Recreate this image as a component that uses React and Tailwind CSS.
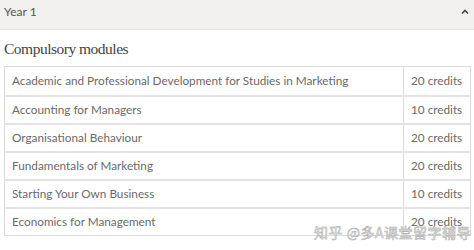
import React from "react";

const rows = [
  ["Academic and Professional Development for Studies in Marketing", "20 credits"],
  ["Accounting for Managers", "10 credits"],
  ["Organisational Behaviour", "20 credits"],
  ["Fundamentals of Marketing", "20 credits"],
  ["Starting Your Own Business", "10 credits"],
  ["Economics for Management", "20 credits"],
];

export default function App() {
  return (
    <div className="relative w-[474px] h-[250px] bg-white overflow-hidden text-[#555]" style={{ fontFamily: "Lato, 'Open Sans', sans-serif" }}>
      <div className="h-[30px] bg-[#f1f0ee] border-b border-[#e6e5e3] flex items-center justify-between pl-[4px] pr-[4px] pb-[6px]">
        <span className="text-[12px] text-[#555]">Year 1</span>
        <svg width="8" height="6" viewBox="0 0 8 6" className="mr-[1px]">
          <path d="M1 4.5 L4 1.5 L7 4.5" fill="none" stroke="#444" strokeWidth="1.6" />
        </svg>
      </div>
      <div className="pl-[4px] pt-[6px] h-[36px]">
        <span className="text-[15.5px] tracking-[-0.5px] text-[#444]" style={{ fontFamily: "'Liberation Serif', serif" }}>Compulsory modules</span>
      </div>
      <div className="ml-[4px] w-[467px] border border-[#dcdcdc]">
        {rows.map(([name, cr], i) => (
          <div key={i} className={"flex h-[28px] " + (i > 0 ? "border-t-2 border-[#e3e3e3]" : "")}>
            <div className="flex-1 flex items-center pl-[7px] text-[11.75px] text-[#6a6a6a]">{name}</div>
            <div className="w-[67px] border-l border-[#dcdcdc] flex items-center pl-[7px] text-[11.75px] text-[#6a6a6a]">{cr}</div>
          </div>
        ))}
      </div>
      <div
        className="absolute left-[314px] top-[225px] text-[14px] leading-[14px] text-[#eeeeee] tracking-[0.5px]"
        style={{ fontFamily: "'Noto Sans CJK SC', sans-serif", WebkitTextStroke: "0.5px #aaaaaa" }}
      >
        知乎 @多A课堂留字辅导
      </div>
    </div>
  );
}
